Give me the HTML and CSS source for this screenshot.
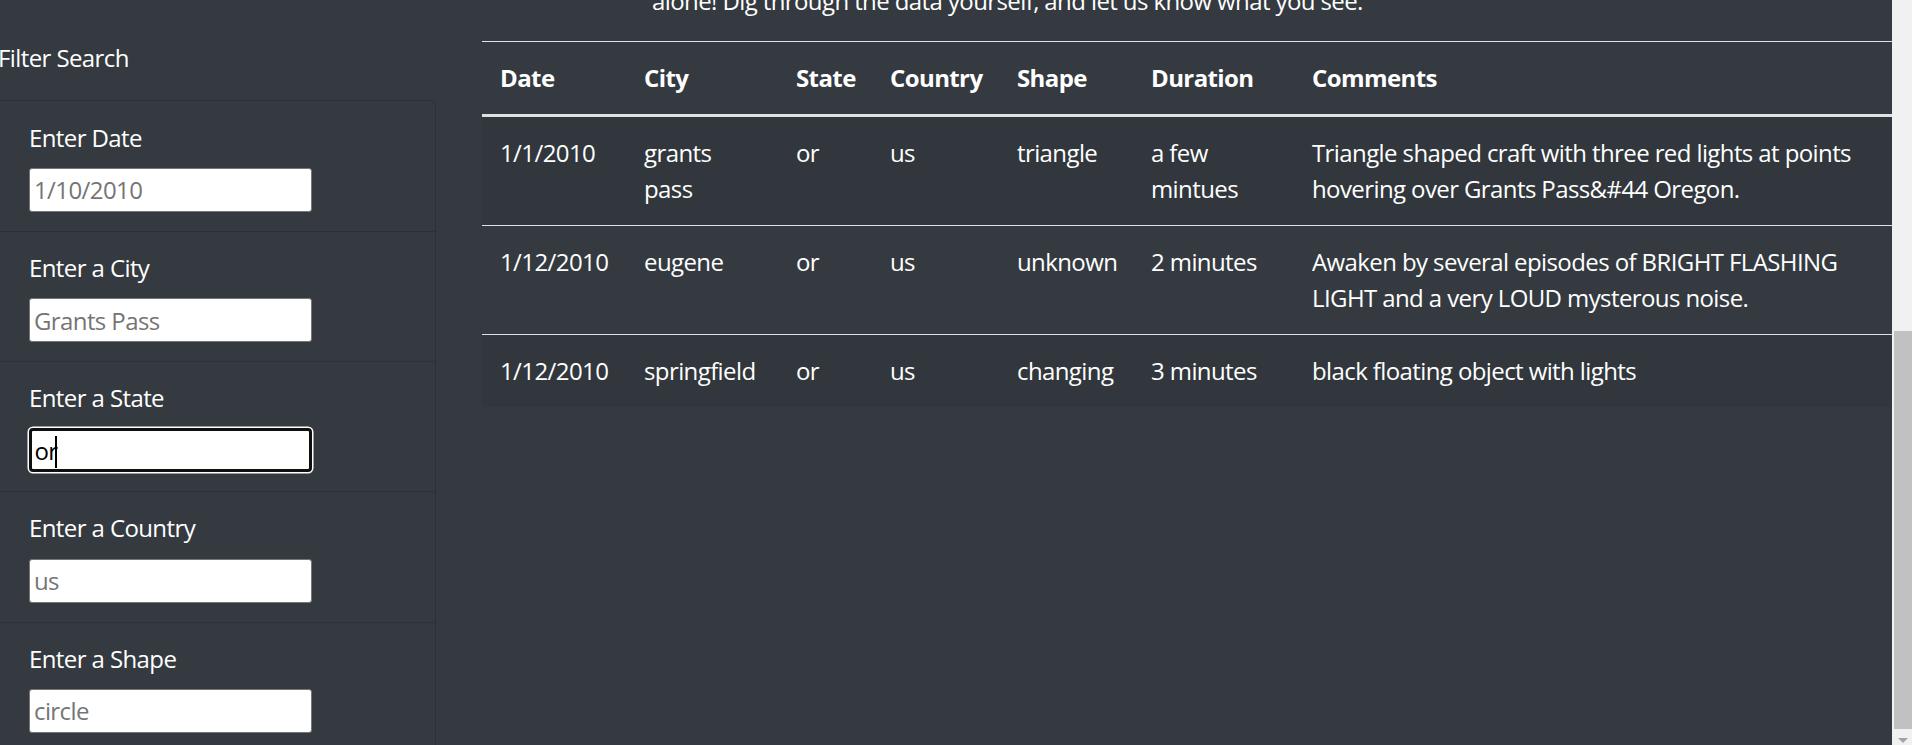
FILE: index.html
```html
<!DOCTYPE html>
<html lang="en">
<head>
<meta charset="utf-8">
<title>UFO Sightings</title>
<link rel="stylesheet" href="styles.css">
</head>
<body>
<div class="screen">
  <div class="viewport">
    <aside class="sidebar">
      <h5 class="filter-title">Filter Search</h5>
      <ul class="filters">
        <li class="filter">
          <label class="filter-label" for="datetime">Enter Date</label>
          <input class="filter-input" id="datetime" type="text" placeholder="1/10/2010">
        </li>
        <li class="filter">
          <label class="filter-label" for="city">Enter a City</label>
          <input class="filter-input" id="city" type="text" placeholder="Grants Pass">
        </li>
        <li class="filter">
          <label class="filter-label" for="state">Enter a State</label>
          <span class="input-wrap"><input class="filter-input is-focused" id="state" type="text" value="or"><span class="caret"></span></span>
        </li>
        <li class="filter">
          <label class="filter-label" for="country">Enter a Country</label>
          <input class="filter-input" id="country" type="text" placeholder="us">
        </li>
        <li class="filter">
          <label class="filter-label" for="shape">Enter a Shape</label>
          <input class="filter-input" id="shape" type="text" placeholder="circle">
        </li>
      </ul>
    </aside>
    <main class="main">
      <p class="lead">alone! Dig through the data yourself, and let us know what you see.</p>
      <table class="ufo-table">
        <colgroup>
          <col class="c-date"><col class="c-city"><col class="c-state"><col class="c-country"><col class="c-shape"><col class="c-duration"><col class="c-comments">
        </colgroup>
        <thead>
          <tr><th>Date</th><th>City</th><th>State</th><th>Country</th><th>Shape</th><th>Duration</th><th>Comments</th></tr>
        </thead>
        <tbody>
          <tr><td>1/1/2010</td><td>grants pass</td><td>or</td><td>us</td><td>triangle</td><td>a few mintues</td><td>Triangle shaped craft with three red lights at points hovering over Grants Pass&amp;#44 Oregon.</td></tr>
          <tr><td>1/12/2010</td><td>eugene</td><td>or</td><td>us</td><td>unknown</td><td>2 minutes</td><td>Awaken by several episodes of BRIGHT FLASHING LIGHT and a very LOUD mysterous noise.</td></tr>
          <tr><td>1/12/2010</td><td>springfield</td><td>or</td><td>us</td><td>changing</td><td>3 minutes</td><td>black floating object with lights</td></tr>
        </tbody>
      </table>
    </main>
  </div>
  <div class="scrollbar">
    <div class="sb-track"></div>
    <div class="sb-thumb"></div>
    <div class="sb-arrow"><span class="sb-tri"></span></div>
  </div>
</div>
</body>
</html>
```
FILE: styles.css
```css
* { box-sizing: border-box; }

html, body {
  margin: 0;
  padding: 0;
  background: #343a40;
}

body {
  font-family: "Open Sans", "Noto Sans", sans-serif;
  font-size: 24px;
  line-height: 36px;
  color: #fff;
  letter-spacing: -0.6px;
}

.screen {
  display: flex;
  height: 745px;
  overflow: hidden;
}

.viewport {
  flex: 1;
  display: flex;
  align-items: flex-start;
  overflow: hidden;
  min-width: 0;
}

/* ---------- sidebar ---------- */
.sidebar {
  flex: none;
  width: 436px;
}

.filter-title {
  margin: 43px 0 27px -2px;
  font-size: 24px;
  line-height: 30px;
  font-weight: 400;
  letter-spacing: -0.6px;
}

.filters {
  list-style: none;
  margin: 0 0 0 -2px;
  padding: 0;
  border: 1.5px solid rgba(0, 0, 0, 0.14);
  border-radius: 0 6px 0 0;
}

.filter {
  padding: 18px 30px 19px;
  border-top: 1.5px solid rgba(0, 0, 0, 0.14);
}

.filter:first-child {
  border-top: 0;
  padding-top: 18.5px;
}

.filter-label {
  display: block;
  margin-bottom: 12.3px;
}

.filter-input {
  display: block;
  width: 283px;
  height: 44px;
  margin: 0;
  padding: 2px 3px 2px 4px;
  font: inherit;
  letter-spacing: -0.6px;
  color: #000;
  background: #fff;
  border: 1.5px solid #767676;
  border-radius: 3px;
  outline: none;
}

.filter-input::placeholder {
  color: #757575;
  opacity: 1;
}

.input-wrap {
  position: relative;
  display: block;
  width: 283px;
}

.filter-input.is-focused {
  border: 3px solid #101010;
  border-radius: 4px;
  padding-left: 2.5px;
  box-shadow: 0 0 0 1.5px #fff;
}

.caret {
  position: absolute;
  left: 26px;
  top: 8px;
  width: 1.5px;
  height: 32px;
  background: #000;
}

/* ---------- main ---------- */
.main {
  flex: 1;
  min-width: 0;
  margin-left: 46px;
}

.lead {
  margin: -17px 0 22px 170px;
  white-space: nowrap;
}

.ufo-table {
  width: 100%;
  table-layout: fixed;
  border-collapse: collapse;
}

.c-date { width: 144px; }
.c-city { width: 152px; }
.c-state { width: 94px; }
.c-country { width: 127px; }
.c-shape { width: 134px; }
.c-duration { width: 161px; }
.c-comments { width: 598px; }

.ufo-table th,
.ufo-table td {
  padding: 18px;
  text-align: left;
  vertical-align: top;
  border-top: 1.5px solid #dee2e6;
}

.ufo-table th {
  font-weight: 700;
  vertical-align: bottom;
  border-bottom: 3px solid #dee2e6;
}

.ufo-table tbody tr:nth-child(odd) {
  background: rgba(0, 0, 0, 0.05);
}

/* ---------- fake scrollbar ---------- */
.scrollbar {
  flex: none;
  width: 20px;
  display: flex;
  flex-direction: column;
  background: #f1f1f1;
}

.sb-track {
  height: 331px;
}

.sb-thumb {
  height: 398px;
  margin-left: 2px;
  background: #c1c1c1;
}

.sb-arrow {
  flex: 1;
  display: flex;
  justify-content: center;
  align-items: flex-end;
  padding: 0 0 2px 2px;
}

.sb-tri {
  width: 0;
  height: 0;
  border-left: 5.5px solid transparent;
  border-right: 5.5px solid transparent;
  border-top: 5px solid #a3a3a3;
}
```
